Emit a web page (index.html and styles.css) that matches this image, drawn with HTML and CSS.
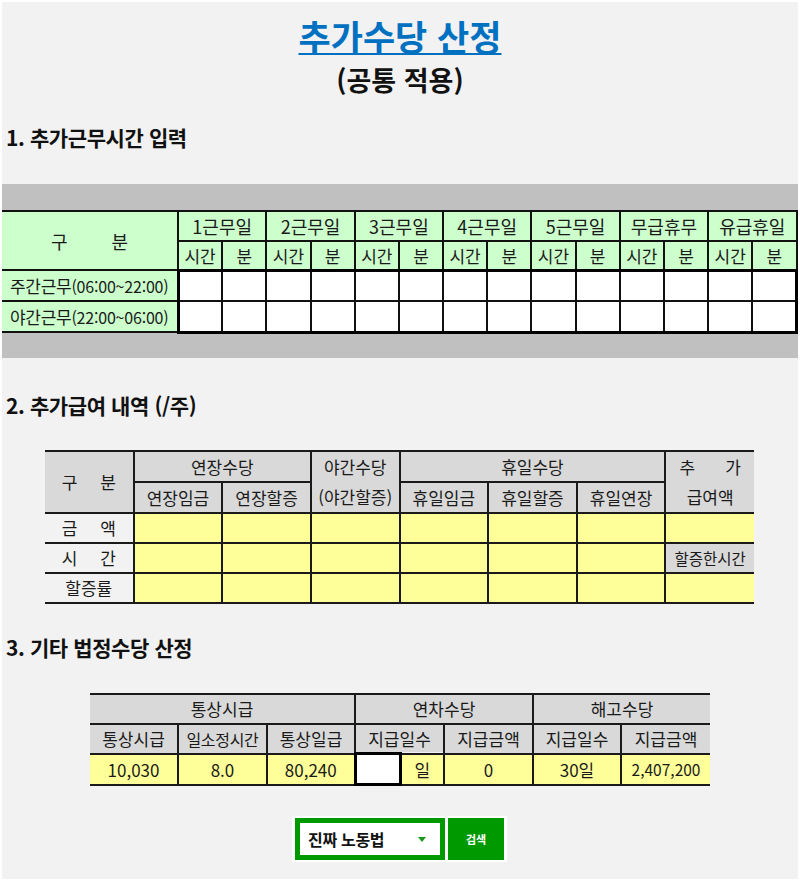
FILE: index.html
```html
<!DOCTYPE html>
<html lang="ko">
<head>
<meta charset="utf-8">
<title>추가수당 산정</title>
<link rel="stylesheet" href="styles.css">
</head>
<body>
<div class="page">
  <h1 class="title"><span>추가수당 산정</span></h1>
  <div class="subtitle">(공통 적용)</div>

  <h2 class="sec sec1">1. 추가근무시간 입력</h2>
  <div class="band">
    <table class="t1">
      <colgroup>
        <col class="c-lab">
        <col><col><col><col><col><col><col><col><col><col><col><col><col><col>
      </colgroup>
      <tr class="h1">
        <th rowspan="2" class="lab">구<span class="sp1"></span>분</th>
        <th colspan="2">1근무일</th>
        <th colspan="2">2근무일</th>
        <th colspan="2">3근무일</th>
        <th colspan="2">4근무일</th>
        <th colspan="2">5근무일</th>
        <th colspan="2">무급휴무</th>
        <th colspan="2">유급휴일</th>
      </tr>
      <tr class="h2">
        <th>시간</th><th>분</th><th>시간</th><th>분</th><th>시간</th><th>분</th><th>시간</th><th>분</th><th>시간</th><th>분</th><th>시간</th><th>분</th><th>시간</th><th>분</th>
      </tr>
      <tr class="d first">
        <th class="lab row">주간근무<span class="par">(06:00~22:00)</span></th>
        <td class="l"></td><td></td><td></td><td></td><td></td><td></td><td></td><td></td><td></td><td></td><td></td><td></td><td></td><td class="r"></td>
      </tr>
      <tr class="d last">
        <th class="lab row">야간근무<span class="par">(22:00~06:00)</span></th>
        <td class="l"></td><td></td><td></td><td></td><td></td><td></td><td></td><td></td><td></td><td></td><td></td><td></td><td></td><td class="r"></td>
      </tr>
    </table>
  </div>

  <h2 class="sec sec2">2. 추가급여 내역 (/주)</h2>
  <table class="t2">
    <colgroup><col><col><col><col><col><col><col><col></colgroup>
    <tr class="r1">
      <th rowspan="2" class="hd">구<span class="sp2"></span>분</th>
      <th colspan="2" class="hd">연장수당</th>
      <th rowspan="2" class="hd two">야간수당<br>(야간할증)</th>
      <th colspan="3" class="hd">휴일수당</th>
      <th rowspan="2" class="hd two">추<span class="sp3"></span>가<br>급여액</th>
    </tr>
    <tr class="r2">
      <th class="hd">연장임금</th><th class="hd">연장할증</th>
      <th class="hd">휴일임금</th><th class="hd">휴일할증</th><th class="hd">휴일연장</th>
    </tr>
    <tr class="dr">
      <th class="dl">금<span class="sp2"></span>액</th>
      <td class="y"></td><td class="y"></td><td class="y"></td><td class="y"></td><td class="y"></td><td class="y"></td><td class="y"></td>
    </tr>
    <tr class="dr">
      <th class="dl">시<span class="sp2"></span>간</th>
      <td class="y"></td><td class="y"></td><td class="y"></td><td class="y"></td><td class="y"></td><td class="y"></td><td class="hd small">할증한시간</td>
    </tr>
    <tr class="dr">
      <th class="dl">할증률</th>
      <td class="y"></td><td class="y"></td><td class="y"></td><td class="y"></td><td class="y"></td><td class="y"></td><td class="y"></td>
    </tr>
  </table>

  <h2 class="sec sec3">3. 기타 법정수당 산정</h2>
  <table class="t3">
    <colgroup>
      <col class="w88"><col class="w89"><col class="w88"><col class="w45"><col class="w44"><col class="w89"><col class="w88"><col class="w89">
    </colgroup>
    <tr class="r1">
      <th colspan="3" class="hd">통상시급</th>
      <th colspan="3" class="hd">연차수당</th>
      <th colspan="2" class="hd">해고수당</th>
    </tr>
    <tr class="r2">
      <th class="hd">통상시급</th><th class="hd narrow">일소정시간</th><th class="hd">통상일급</th>
      <th colspan="2" class="hd">지급일수</th><th class="hd">지급금액</th>
      <th class="hd">지급일수</th><th class="hd">지급금액</th>
    </tr>
    <tr class="r3">
      <td class="y">10,030</td><td class="y">8.0</td><td class="y">80,240</td>
      <td class="input"></td><td class="y">일</td><td class="y">0</td>
      <td class="y">30일</td><td class="y small">2,407,200</td>
    </tr>
  </table>

  <div class="controls">
    <div class="select"><span>진짜 노동법</span><span class="tri"></span></div>
    <div class="btn">검색</div>
  </div>
</div>
</body>
</html>
```

FILE: styles.css
```css
html, body {
  margin: 0;
  padding: 0;
  background: #ffffff;
}

body {
  font-family: "Noto Sans CJK KR", "Noto Sans", sans-serif;
  color: #1a1a1a;
}

.page {
  margin: 2px;
  height: 877px;
  background: #f2f2f2;
  display: flex;
  flex-direction: column;
  overflow: hidden;
}

.title {
  margin: 14px 0 0;
  text-align: center;
  font-size: 35px;
  font-weight: 700;
  line-height: 40px;
  color: #0070c0;
}

.title span {
  text-decoration: underline;
  text-decoration-thickness: 2px;
  text-underline-offset: 2px;
}

.subtitle {
  margin-top: 8px;
  text-align: center;
  font-size: 27px;
  font-weight: 700;
  line-height: 32px;
  color: #111;
}

.sec {
  margin: 0;
  padding-left: 4px;
  font-size: 21px;
  font-weight: 700;
  line-height: 24px;
  color: #111;
  letter-spacing: -0.4px;
}

.sec1 { margin-top: 29px; }
.sec2 { margin-top: 35px; }
.sec3 { margin-top: 31px; }

/* ---------- table 1 ---------- */
.band {
  margin-top: 35px;
  background: #c0c0c0;
  padding: 26px 0 24px;
}

table {
  border-collapse: collapse;
  table-layout: fixed;
}

th, td {
  padding: 0;
  font-weight: 400;
  text-align: center;
  white-space: nowrap;
  overflow: hidden;
}

.t1 {
  width: 796px;
  font-size: 18px;
  color: #1a1a1a;
}

.t1 .c-lab { width: 176px; }

.t1 th {
  background: #ccffcc;
  border: 2px solid #111;
}

.t1 th.lab {
  border-left: none;
}

.t1 tr.h1 { height: 30px; }
.t1 tr.h2 { height: 29px; }
.t1 tr.h2 th { font-size: 17px; }
.t1 tr.d { height: 31px; }

.t1 .row {
  font-size: 17px;
  letter-spacing: -0.3px;
}

.t1 .par { font-size: 16px; letter-spacing: -0.2px; }

.t1 td {
  background: #ffffff;
  border: 2px solid #111;
}

.t1 tr.first td { border-top: 3px solid #000; }
.t1 tr.last td { border-bottom: 3px solid #000; }
.t1 td.l { border-left: 3px solid #000; }
.t1 td.r { border-right: 3px solid #000; }

.sp1 { display: inline-block; width: 44px; }
.sp2 { display: inline-block; width: 23px; }
.sp3 { display: inline-block; width: 30px; }

/* ---------- table 2 ---------- */
.t2 {
  margin-top: 33px;
  margin-left: 43px;
  width: 709px;
  font-size: 17px;
}

.t2 th, .t2 td {
  border: 2px solid #1a1a1a;
}

.t2 tr > :first-child { border-left: none; }
.t2 tr > :last-child { border-right: none; }
.t2 tr.r1 > .hd:last-child { border-right: none; }

.t2 tr.r1 { height: 30px; }
.t2 tr.r2 { height: 30px; }
.t2 tr.dr { height: 30px; }

.hd { background: #d9d9d9; }
.y { background: #ffff99; }
.dl { background: transparent; }

.t2 .two { line-height: 30px; }
.t2 .small { font-size: 15.5px; }

/* ---------- table 3 ---------- */
.t3 {
  margin-top: 34px;
  margin-left: 88px;
  width: 620px;
  font-size: 17px;
}

.t3 .w88 { width: 88px; }
.t3 .w89 { width: 89px; }
.t3 .w45 { width: 45px; }
.t3 .w44 { width: 44px; }

.t3 th, .t3 td {
  border: 2px solid #1a1a1a;
}

.t3 tr > :first-child { border-left: none; }
.t3 tr > :last-child { border-right: none; }

.t3 tr.r1 { height: 30px; }
.t3 tr.r2 { height: 30px; }
.t3 tr.r3 { height: 31px; }

.t3 .narrow { font-size: 16px; letter-spacing: -0.3px; }
.t3 .small { font-size: 15.5px; }
.t3 td.input {
  background: #ffffff;
  border: 3px solid #000;
}

/* ---------- controls ---------- */
.controls {
  align-self: flex-start;
  margin-top: 30px;
  margin-left: 290px;
  background: #ffffff;
  padding: 2px 3px;
  display: flex;
  gap: 3px;
}

.select {
  box-sizing: border-box;
  width: 150px;
  height: 42px;
  border: 5px solid #009900;
  background: #ffffff;
  display: flex;
  align-items: center;
  justify-content: space-between;
  padding: 0 14px 0 8px;
  font-size: 16px;
  font-weight: 700;
  color: #111;
  letter-spacing: -0.3px;
}

.tri {
  width: 0;
  height: 0;
  border-left: 4px solid transparent;
  border-right: 4px solid transparent;
  border-top: 5px solid #1a9a1a;
}

.btn {
  width: 56px;
  height: 42px;
  background: #009900;
  color: #ffffff;
  font-size: 11px;
  font-weight: 700;
  display: flex;
  align-items: center;
  justify-content: center;
}
```
